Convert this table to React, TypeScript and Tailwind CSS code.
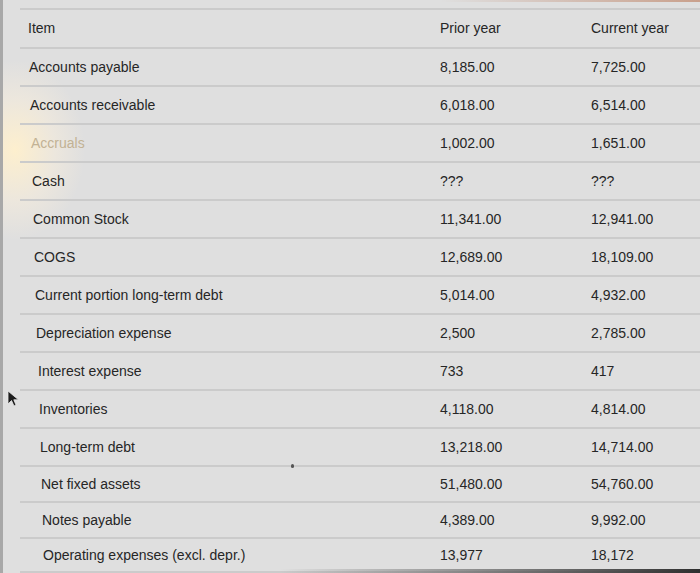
import React from 'react'

interface Row {
  item: string;
  prior: string;
  current: string;
  indent: number;
  h: string;
  faded?: boolean;
}

const ROWS: Row[] = [
  { item: 'Accounts payable', prior: '8,185.00', current: '7,725.00', indent: 9, h: 'h-[38px]' },
  { item: 'Accounts receivable', prior: '6,018.00', current: '6,514.00', indent: 10, h: 'h-[38px]' },
  { item: 'Accruals', prior: '1,002.00', current: '1,651.00', indent: 11, h: 'h-[38px]', faded: true },
  { item: 'Cash', prior: '???', current: '???', indent: 12, h: 'h-[38px]' },
  { item: 'Common Stock', prior: '11,341.00', current: '12,941.00', indent: 13, h: 'h-[38px]' },
  { item: 'COGS', prior: '12,689.00', current: '18,109.00', indent: 14, h: 'h-[38px]' },
  { item: 'Current portion long-term debt', prior: '5,014.00', current: '4,932.00', indent: 15, h: 'h-[38px]' },
  { item: 'Depreciation expense', prior: '2,500', current: '2,785.00', indent: 16, h: 'h-[38px]' },
  { item: 'Interest expense', prior: '733', current: '417', indent: 18, h: 'h-[38px]' },
  { item: 'Inventories', prior: '4,118.00', current: '4,814.00', indent: 19, h: 'h-[38px]' },
  { item: 'Long-term debt', prior: '13,218.00', current: '14,714.00', indent: 20, h: 'h-[38px]' },
  { item: 'Net fixed assets', prior: '51,480.00', current: '54,760.00', indent: 21, h: 'h-[36px]' },
  { item: 'Notes payable', prior: '4,389.00', current: '9,992.00', indent: 22, h: 'h-[36px]' },
  { item: 'Operating expenses (excl. depr.)', prior: '13,977', current: '18,172', indent: 23, h: 'h-[34px]' },
];

function Cursor() {
  return (
    <svg width="14" height="18" viewBox="0 0 14 18" className="absolute left-[7px] top-[390px]">
      <path d="M1 1 L1 14 L4.5 10.5 L7 16 L9 15 L6.8 9.8 L11.5 9.8 Z" fill="#1c1c1c" stroke="#e8e8e8" strokeWidth="0.8" />
    </svg>
  );
}

export default function App() {
  return (
    <div className="relative w-[700px] h-[573px] overflow-hidden bg-[#dfdfdf] font-['Liberation_Sans',Arial,sans-serif] text-[14px] text-[#262626]">
      <div className="absolute inset-0 bg-[radial-gradient(ellipse_70px_90px_at_15px_150px,rgba(255,240,205,0.95)_0px,rgba(245,236,220,0.6)_40px,rgba(224,224,224,0)_100%)] pointer-events-none" />
      <div className="absolute inset-y-0 left-0 w-[3px] bg-[#a8a8a8]" />
      <div className="absolute top-0 right-0 w-[260px] h-[2px] bg-gradient-to-r from-transparent to-[#c9a08c]" />

      <div className="relative ml-[20px] pt-[8px]">
        <div className="grid grid-cols-[420px_151px_1fr] items-center h-[39px] border-t-2 border-[#cbcbcb]">
          <span className="pl-[8px]">Item</span>
          <span>Prior year</span>
          <span>Current year</span>
        </div>
        {ROWS.map((r) => (
          <div
            key={r.item}
            className={`grid grid-cols-[420px_151px_1fr] items-center border-t-2 border-[#cbcbcb] ${r.h}`}
          >
            <span className={r.faded ? 'text-[#c2b294]' : ''} style={{ paddingLeft: r.indent }}>
              {r.item}
            </span>
            <span>{r.prior}</span>
            <span>{r.current}</span>
          </div>
        ))}
        <div className="border-t-2 border-[#cbcbcb]" />
      </div>

      <div className="absolute bottom-0 right-0 w-[420px] h-[4px] bg-gradient-to-r from-transparent to-[#2f2f2f]" />
      <div className="absolute left-[291px] top-[464px] w-[3px] h-[4px] rounded-full bg-[#555]" />
      <Cursor />
    </div>
  )
}
